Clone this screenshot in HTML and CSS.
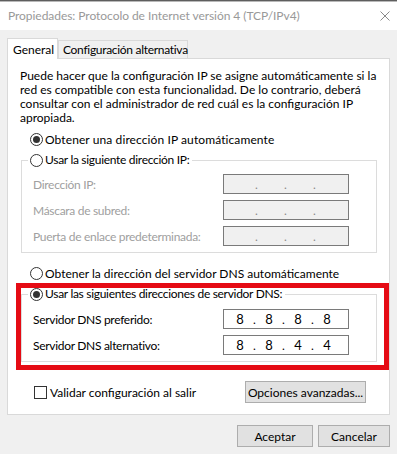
FILE: index.html
```html
<!DOCTYPE html>
<html lang="es">
<head>
<meta charset="utf-8">
<title>Propiedades: Protocolo de Internet versión 4 (TCP/IPv4)</title>
<link rel="stylesheet" href="styles.css">
</head>
<body>
<div class="window">
  <div class="titlebar">
    <span class="title">Propiedades: Protocolo de Internet versión 4 (TCP/IPv4)</span>
    <svg class="close" width="10" height="10" viewBox="0 0 10 10"><path d="M0.5 0.5 L9.5 9.5 M9.5 0.5 L0.5 9.5" stroke="#8a8a8a" stroke-width="1" fill="none"/></svg>
  </div>
  <div class="content">
    <div class="tabs">
      <div class="tab active">General</div>
      <div class="tab">Configuración alternativa</div>
    </div>
    <div class="panel">
      <p class="intro">Puede hacer que la configuración IP se asigne automáticamente si la<br>red es compatible con esta funcionalidad. De lo contrario, deberá<br>consultar con el administrador de red cuál es la configuración IP<br>apropiada.</p>
      <div class="radio-row r1"><span class="radio checked"></span><span>Obtener una dirección IP automáticamente</span></div>
      <fieldset class="group g1">
        <legend><span class="radio"></span><span>Usar la siguiente dirección IP:</span></legend>
        <div class="field disabled"><span class="label">Dirección IP:</span><span class="ipbox"><span class="oct"></span><span class="dot">.</span><span class="oct"></span><span class="dot">.</span><span class="oct"></span><span class="dot">.</span><span class="oct"></span></span></div>
        <div class="field disabled"><span class="label">Máscara de subred:</span><span class="ipbox"><span class="oct"></span><span class="dot">.</span><span class="oct"></span><span class="dot">.</span><span class="oct"></span><span class="dot">.</span><span class="oct"></span></span></div>
        <div class="field disabled"><span class="label">Puerta de enlace predeterminada:</span><span class="ipbox"><span class="oct"></span><span class="dot">.</span><span class="oct"></span><span class="dot">.</span><span class="oct"></span><span class="dot">.</span><span class="oct"></span></span></div>
      </fieldset>
      <div class="radio-row r3"><span class="radio"></span><span>Obtener la dirección del servidor DNS automáticamente</span></div>
      <fieldset class="group g2">
        <legend><span class="radio checked"></span><span>Usar las siguientes direcciones de servidor DNS:</span></legend>
        <div class="field"><span class="label">Servidor DNS preferido:</span><span class="ipbox"><span class="oct">8</span><span class="dot">.</span><span class="oct">8</span><span class="dot">.</span><span class="oct">8</span><span class="dot">.</span><span class="oct">8</span></span></div>
        <div class="field"><span class="label">Servidor DNS alternativo:</span><span class="ipbox"><span class="oct">8</span><span class="dot">.</span><span class="oct">8</span><span class="dot">.</span><span class="oct">4</span><span class="dot">.</span><span class="oct">4</span></span></div>
      </fieldset>
      <div class="footer-row">
        <div class="check"><span class="checkbox"></span><span>Validar configuración al salir</span></div>
        <button class="btn adv">Opciones avanzadas...</button>
      </div>
      <div class="highlight"></div>
    </div>
    <div class="actions">
      <button class="btn ok">Aceptar</button>
      <button class="btn cancel">Cancelar</button>
    </div>
  </div>
</div>
</body>
</html>
```
FILE: styles.css
```css
html, body {
  margin: 0;
  padding: 0;
}
body {
  font-family: Lato, "Noto Sans", sans-serif;
  font-size: 12px;
  color: #000;
  background: #f0f0f0;
}
.window {
  width: 397px;
  height: 454px;
  overflow: hidden;
  background: #f0f0f0;
}
.titlebar {
  box-sizing: border-box;
  height: 30px;
  background: #fff;
  border-top: 1px solid #5e5e5e;
  box-shadow: inset 0 1px 0 #b8b8b8;
  display: flex;
  align-items: center;
  justify-content: space-between;
  padding: 0 7px 0 8px;
}
.title {
  color: #999;
  white-space: nowrap;
  letter-spacing: -0.05px;
}
.close {
  display: block;
}
.content {
  padding: 8px 7px 0;
}
.tabs {
  display: flex;
  align-items: flex-end;
  height: 20px;
}
.tab {
  box-sizing: border-box;
  height: 18px;
  border: 1px solid #d9d9d9;
  border-bottom: none;
  background: #f0f0f0;
  padding: 0 4px;
  display: flex;
  align-items: center;
  white-space: nowrap;
  width: 130px;
  letter-spacing: -0.3px;
}
.tab.active {
  width: 51px;
  height: 21px;
  margin-bottom: -1px;
  background: #fff;
  padding: 0 5px;
  position: relative;
  z-index: 1;
  letter-spacing: 0;
}
.panel {
  box-sizing: border-box;
  height: 357px;
  background: #fff;
  border: 1px solid #d9d9d9;
  position: relative;
  padding-top: 10px;
}
.intro {
  margin: 0 0 0 12px;
  line-height: 14px;
  white-space: nowrap;
}
.radio-row {
  display: flex;
  align-items: center;
  gap: 2px;
  height: 14px;
  margin-left: 22px;
  white-space: nowrap;
}
.r1 { margin-top: 7px; letter-spacing: 0.1px; }
.r3 { margin-top: 13px; }
.radio {
  box-sizing: border-box;
  width: 13px;
  height: 13px;
  border: 1px solid #333;
  border-radius: 50%;
  background: #fff;
  display: inline-flex;
  align-items: center;
  justify-content: center;
  flex: none;
}
.radio.checked::after {
  content: "";
  width: 7px;
  height: 7px;
  border-radius: 50%;
  background: #333;
}
.group {
  margin: 7px 12px 0 13px;
  padding: 7px 0 6px 0;
  border: 1px solid #dcdcdc;
  min-width: 0;
}
.g2 { padding-top: 8px; }
.group legend {
  display: flex;
  align-items: center;
  gap: 2px;
  height: 14px;
  line-height: 14px;
  padding: 0 3px 0 2px;
  margin-left: 6px;
  white-space: nowrap;
  letter-spacing: -0.3px;
}
.field {
  display: flex;
  align-items: center;
  height: 20px;
  padding-left: 11px;
}
.field + .field {
  margin-top: 6px;
}
.label {
  width: 190px;
  flex: none;
  white-space: nowrap;
  letter-spacing: -0.3px;
}
.field.disabled .label {
  color: #a0a0a0;
}
.ipbox {
  box-sizing: border-box;
  width: 126px;
  height: 20px;
  border: 1px solid #7a7a7a;
  background: #fff;
  display: flex;
  align-items: center;
  padding-left: 5px;
}
.field.disabled .ipbox {
  background: #f0f0f0;
  color: #8a8a8a;
  padding-left: 7px;
}
.oct {
  width: 22px;
  text-align: center;
  font-size: 13px;
}
.dot {
  width: 7px;
  text-align: center;
}
.footer-row {
  display: flex;
  align-items: center;
  justify-content: space-between;
  margin-top: 19px;
  padding: 0 23px 0 26px;
}
.check {
  display: flex;
  align-items: center;
  gap: 3px;
  white-space: nowrap;
}
.checkbox {
  box-sizing: border-box;
  width: 13px;
  height: 13px;
  border: 1px solid #333;
  background: #fff;
  flex: none;
}
.btn {
  box-sizing: border-box;
  height: 22px;
  background: #e1e1e1;
  border: 1px solid #adadad;
  font-family: inherit;
  font-size: 12px;
  color: #000;
  padding: 0;
  white-space: nowrap;
}
.adv { width: 121px; }
.ok { width: 76px; }
.cancel { width: 72px; }
.highlight {
  position: absolute;
  box-sizing: border-box;
  left: 8px;
  top: 224px;
  width: 373px;
  height: 87px;
  border: 5px solid #e50b14;
}
.actions {
  display: flex;
  justify-content: flex-end;
  gap: 5px;
  margin-top: 10px;
}
```
